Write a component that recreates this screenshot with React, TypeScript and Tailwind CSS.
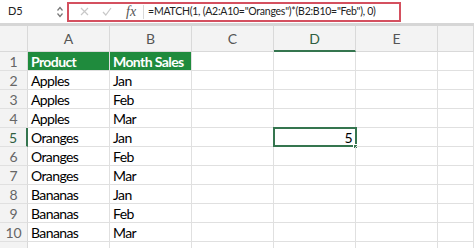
import React from "react";

const cols = ["A", "B", "C", "D", "E", ""];
const data: [string, string][] = [
  ["Product", "Month Sales"],
  ["Apples", "Jan"],
  ["Apples", "Feb"],
  ["Apples", "Mar"],
  ["Oranges", "Jan"],
  ["Oranges", "Feb"],
  ["Oranges", "Mar"],
  ["Bananas", "Jan"],
  ["Bananas", "Feb"],
  ["Bananas", "Mar"],
  ["", ""],
];

export default function App() {
  return (
    <div className="w-[474px] h-[248px] overflow-hidden bg-white" style={{ fontFamily: "Lato, 'Open Sans', sans-serif" }}>
      {/* formula bar */}
      <div className="flex h-[23px] items-center bg-white">
        <div className="flex w-[66px] h-full items-center pl-[8px] pr-[3px]">
          <span className="text-[11px] text-[#222] flex-1">D5</span>
          <svg width="6" height="12" viewBox="0 0 6 12" className="text-[#777]">
            <path d="M0.5 4.5 L3 1.5 L5.5 4.5" fill="none" stroke="currentColor" strokeWidth="1.2" />
            <path d="M0.5 7.5 L3 10.5 L5.5 7.5" fill="none" stroke="currentColor" strokeWidth="1.2" />
          </svg>
        </div>
        <div className="ml-[1px] flex h-[20px] w-[334px] items-center border-2 border-[#d4505f] bg-white">
          <svg width="9" height="9" viewBox="0 0 9 9" className="ml-[11px] text-[#c8c8c8]">
            <path d="M1 1 L8 8 M8 1 L1 8" stroke="currentColor" strokeWidth="1.2" />
          </svg>
          <svg width="10" height="9" viewBox="0 0 10 9" className="ml-[13px] text-[#c8c8c8]">
            <path d="M1 5 L3.8 8 L9 1" fill="none" stroke="currentColor" strokeWidth="1.2" />
          </svg>
          <span className="ml-[14px] text-[14px] italic text-[#555] leading-none" style={{ fontFamily: "'Liberation Serif', serif" }}>fx</span>
          <div className="ml-[7px] h-[14px] w-px bg-[#d8d8d8]" />
          <span className="ml-[4px] text-[10.5px] tracking-[-0.25px] text-[#222] whitespace-nowrap">=MATCH(1, (A2:A10="Oranges")*(B2:B10="Feb"), 0)</span>
        </div>
        <div className="flex-1 h-full" />
      </div>
      <div className="h-[3px] bg-[#d6d6d6]" />
      {/* grid */}
      <div className="grid grid-cols-[28px_82px_82px_82px_82px_82px_1fr] grid-rows-[26px_repeat(11,19px)]">
        <div className="bg-[#f3f3f3] border-r border-b border-[#d9d9d9]" />
        {cols.map((c, i) => (
          <div
            key={c + i}
            className={
              "flex items-center justify-center bg-[#f3f3f3] border-r text-[14px] " +
              (c === "D" ? "border-b-2 border-b-[#35754f] border-r-[#d9d9d9] text-[#2f5e40]" : "border-b border-[#d9d9d9] text-[#555]")
            }
          >
            {c}
          </div>
        ))}
        {data.map((row, r) => (
          <React.Fragment key={r}>
            <div
              className={
                "flex items-center justify-center bg-[#f3f3f3] border-b border-[#e0e0e0] text-[14px] " +
                (r === 4 ? "border-r-2 border-r-[#35754f] text-[#2f5e40]" : "border-r border-r-[#d9d9d9] text-[#666]")
              }
            >
              {r < 10 ? r + 1 : ""}
            </div>
            {[0, 1, 2, 3, 4, 5].map((c) => {
              const header = r === 0 && c < 2;
              const text = c < 2 ? row[c] : "";
              const sel = r === 4 && c === 3;
              return (
                <div
                  key={c}
                  className={
                    "relative flex items-center border-r border-b border-[#e0e0e0] text-[14px] tracking-[-0.6px] whitespace-nowrap " +
                    (header ? "bg-[#1f8b3d] text-white font-bold pl-[3px]" : "text-black pl-[3px]") +
                    (sel ? " justify-end pr-[3px]" : "")
                  }
                >
                  {sel ? "5" : text}
                  {sel && (
                    <>
                      <div className="absolute left-[-1px] top-[-1px] right-[-2px] bottom-[-1px] border-2 border-[#35754f]" />
                      <div className="absolute right-[-3px] bottom-[-3px] h-[5px] w-[5px] bg-[#35754f] border border-white" />
                    </>
                  )}
                </div>
              );
            })}
          </React.Fragment>
        ))}
      </div>
    </div>
  );
}
